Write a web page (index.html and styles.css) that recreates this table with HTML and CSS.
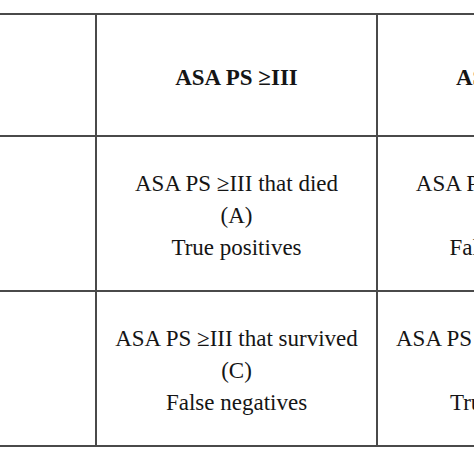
FILE: index.html
```html
<!DOCTYPE html>
<html>
<head>
<meta charset="utf-8">
<link rel="stylesheet" href="styles.css">
</head>
<body>
<div class="grid">
  <div class="cell top first"></div>
  <div class="cell top head">ASA PS ≥III</div>
  <div class="cell top head">ASA PS &lt;III</div>

  <div class="cell first"></div>
  <div class="cell"><span>ASA PS ≥III that died</span><span>(A)</span><span>True positives</span></div>
  <div class="cell"><span>ASA PS &lt;III that died</span><span>(B)</span><span>False positives</span></div>

  <div class="cell first"></div>
  <div class="cell"><span>ASA PS ≥III that survived</span><span>(C)</span><span>False negatives</span></div>
  <div class="cell"><span>ASA PS &lt;III that survived</span><span>(D)</span><span>True negatives</span></div>
</div>
</body>
</html>
```
FILE: styles.css
```css
html, body {
  margin: 0;
  padding: 0;
  background: #fff;
  overflow: hidden;
}
body {
  font-family: "Liberation Serif", "Times New Roman", serif;
  font-size: 23px;
  color: #151515;
}
.grid {
  margin-top: 13px;
  display: grid;
  grid-template-columns: 97px 281px 281px;
  grid-template-rows: 124px 155px 155px;
  width: 659px;
}
.cell {
  box-sizing: border-box;
  border-right: 2px solid #4a4a4a;
  border-bottom: 2px solid #4a4a4a;
  display: flex;
  flex-direction: column;
  align-items: center;
  justify-content: center;
  text-align: center;
  line-height: 32px;
  padding-top: 5px;
  white-space: nowrap;
}
.top {
  border-top: 2px solid #4a4a4a;
}
.head {
  font-weight: bold;
}
```
